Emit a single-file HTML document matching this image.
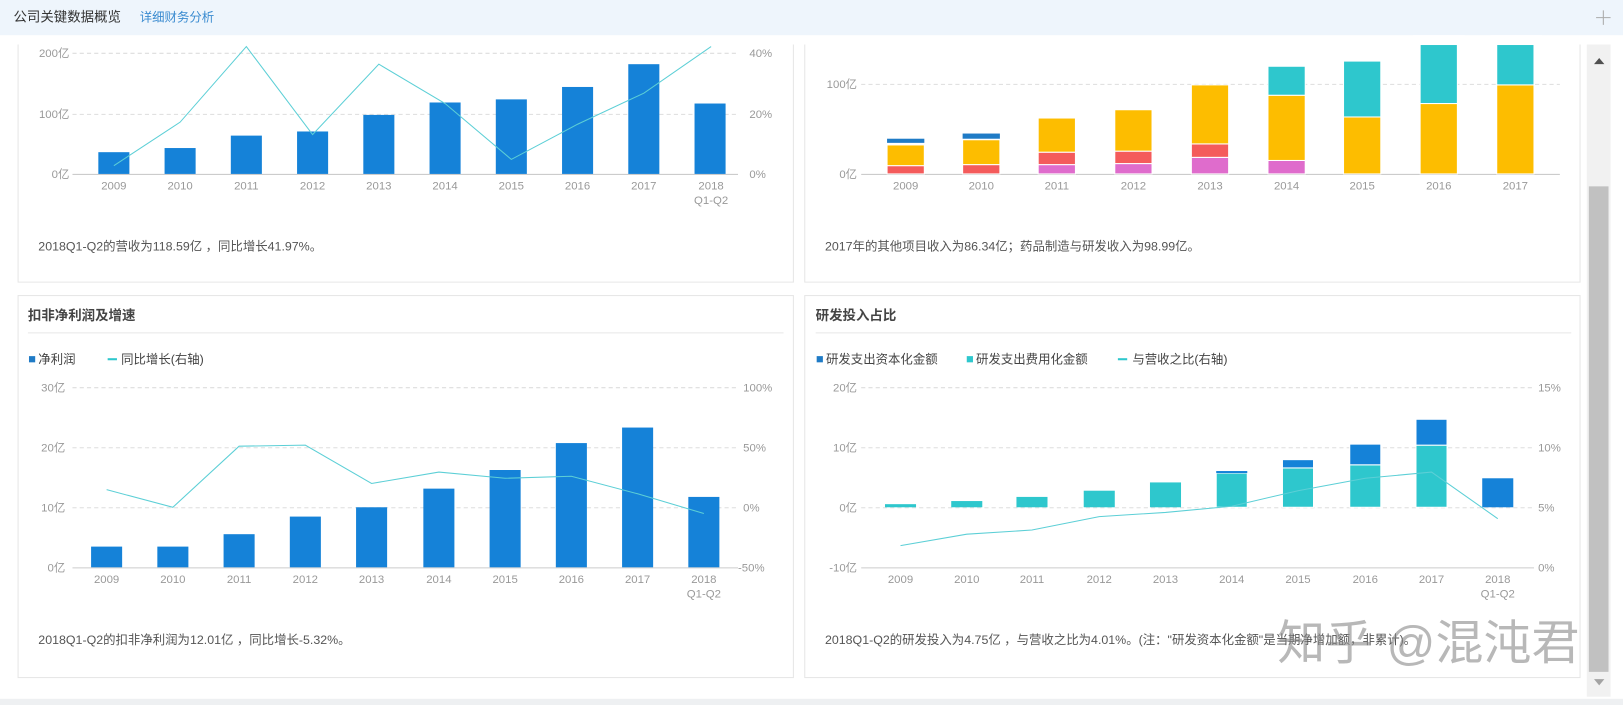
<!DOCTYPE html>
<html><head><meta charset="utf-8">
<style>
html,body{margin:0;padding:0;background:#fff;width:1623px;height:705px;overflow:hidden}
svg{display:block}
text{font-family:"Liberation Sans","Noto Sans CJK SC",sans-serif}
.ax{font-size:11px;fill:#999}
.t{font-size:12px;fill:#555}
.h{font-size:13px;fill:#444;font-weight:bold}
.lg{font-size:12px;fill:#444}
</style></head><body>
<svg width="1623" height="705" viewBox="0 0 1568 681" preserveAspectRatio="none">
<rect x="0" y="0" width="1568" height="681" fill="#fff"/>
<rect x="0" y="0" width="1568" height="34" fill="#eef5fc"/>
<text x="13" y="21" font-size="13" fill="#333">公司关键数据概览</text>
<text x="135" y="21" font-size="12" fill="#3a8bd0">详细财务分析</text>
<path d="M1549 10v14M1542 17h14" stroke="#aaa" stroke-width="1"/>
<rect x="0" y="675" width="1568" height="6" fill="#eef0f2"/>
<rect x="1533" y="43" width="23" height="630" fill="#f1f1f1"/>
<rect x="1535" y="180" width="19" height="469" fill="#c1c1c1"/>
<path d="M1540 62l5-6 5 6z" fill="#505050"/>
<path d="M1540 656l5 6 5-6z" fill="#a3a3a3"/>

<g fill="none" stroke="#e6e6e6">
<path d="M17.5 43v229.5h749v-229.5"/>
<path d="M777.5 43v229.5h749v-229.5"/>
<rect x="17.5" y="285.5" width="749" height="369"/>
<rect x="777.5" y="285.5" width="749" height="369"/>
</g>

<g stroke="#ddd" stroke-dasharray="4,3"><path d="M70 51.5h643M70 110.5h643"/></g>
<path d="M70 168.5h643" stroke="#ccc"/>
<g class="ax" text-anchor="end"><text x="67" y="55">200亿</text><text x="67" y="114">100亿</text><text x="67" y="172">0亿</text></g>
<g class="ax"><text x="724" y="55">40%</text><text x="724" y="114">20%</text><text x="724" y="172">0%</text></g>
<g fill="#1582d8">
<rect x="95" y="147" width="30" height="21"/><rect x="159" y="143" width="30" height="25"/>
<rect x="223" y="131" width="30" height="37"/><rect x="287" y="127" width="30" height="41"/>
<rect x="351" y="111" width="30" height="57"/><rect x="415" y="99" width="30" height="69"/>
<rect x="479" y="96" width="30" height="72"/><rect x="543" y="84" width="30" height="84"/>
<rect x="607" y="62" width="30" height="106"/><rect x="671" y="100" width="30" height="68"/>
</g>
<polyline fill="none" stroke="#5ccfd6" stroke-width="1" points="110,160 174,118 238,45 302,130 366,62 430,100 494,154 558,120 622,90 687,45"/>
<g class="ax" text-anchor="middle"><text x="110" y="183">2009</text><text x="174" y="183">2010</text><text x="238" y="183">2011</text><text x="302" y="183">2012</text><text x="366" y="183">2013</text><text x="430" y="183">2014</text><text x="494" y="183">2015</text><text x="558" y="183">2016</text><text x="622" y="183">2017</text><text x="687" y="183">2018</text><text x="687" y="197">Q1-Q2</text></g>
<text class="t" x="37" y="242">2018Q1-Q2的营收为118.59亿 ，同比增长41.97%。</text>

<path d="M832 81.5h675" stroke="#ddd" stroke-dasharray="4,3"/>
<path d="M832 168.5h675" stroke="#ccc"/>
<g class="ax" text-anchor="end"><text x="828" y="85">100亿</text><text x="828" y="172">0亿</text></g>
<g stroke="#fff" stroke-width="1">
<rect x="857" y="160" width="36" height="8" fill="#f45b5b"/><rect x="857" y="140" width="36" height="20" fill="#fdbd00"/><rect x="857" y="134" width="36" height="4" fill="#1f7bc6" stroke="none"/>
<rect x="930" y="159" width="36" height="9" fill="#f45b5b"/><rect x="930" y="135" width="36" height="24" fill="#fdbd00"/><rect x="930" y="129" width="36" height="5" fill="#1f7bc6" stroke="none"/>
<rect x="1003" y="159" width="36" height="9" fill="#df6ccc"/><rect x="1003" y="147" width="36" height="12" fill="#f45b5b"/><rect x="1003" y="114" width="36" height="33" fill="#fdbd00"/>
<rect x="1077" y="158" width="36" height="10" fill="#df6ccc"/><rect x="1077" y="146" width="36" height="12" fill="#f45b5b"/><rect x="1077" y="106" width="36" height="40" fill="#fdbd00"/>
<rect x="1151" y="152" width="36" height="16" fill="#df6ccc"/><rect x="1151" y="139" width="36" height="13" fill="#f45b5b"/><rect x="1151" y="82" width="36" height="57" fill="#fdbd00"/>
<rect x="1225" y="155" width="36" height="13" fill="#df6ccc"/><rect x="1225" y="92" width="36" height="63" fill="#fdbd00"/><rect x="1225" y="64" width="36" height="28" fill="#2ec7cd"/>
<rect x="1298" y="113" width="36" height="55" fill="#fdbd00"/><rect x="1298" y="59" width="36" height="54" fill="#2ec7cd"/>
<rect x="1372" y="100" width="36" height="68" fill="#fdbd00"/><rect x="1372" y="43" width="36" height="57" fill="#2ec7cd"/>
<rect x="1446" y="82" width="36" height="86" fill="#fdbd00"/><rect x="1446" y="43" width="36" height="39" fill="#2ec7cd"/>
</g>
<rect x="1440" y="34" width="50" height="9" fill="#fff"/>
<rect x="1365" y="34" width="50" height="9" fill="#fff"/>
<g class="ax" text-anchor="middle"><text x="875" y="183">2009</text><text x="948" y="183">2010</text><text x="1021" y="183">2011</text><text x="1095" y="183">2012</text><text x="1169" y="183">2013</text><text x="1243" y="183">2014</text><text x="1316" y="183">2015</text><text x="1390" y="183">2016</text><text x="1464" y="183">2017</text></g>
<text class="t" x="797" y="242">2017年的其他项目收入为86.34亿；药品制造与研发收入为98.99亿。</text>

<text class="h" x="27" y="309">扣非净利润及增速</text>
<path d="M27 321.5h730" stroke="#e6e6e6"/>
<rect x="28" y="344" width="6" height="6" fill="#1f7bc6"/><text class="lg" x="37" y="351">净利润</text>
<path d="M104 347h9" stroke="#2ec7cd" stroke-width="2"/><text class="lg" x="117" y="351">同比增长(右轴)</text>
<g stroke="#ddd" stroke-dasharray="4,3"><path d="M70 374.5h643M70 432.5h643M70 490.5h643"/></g>
<path d="M70 548.5h643" stroke="#ccc"/>
<g class="ax" text-anchor="end"><text x="63" y="378">30亿</text><text x="63" y="436">20亿</text><text x="63" y="494">10亿</text><text x="63" y="552">0亿</text></g>
<g class="ax"><text x="718" y="378">100%</text><text x="718" y="436">50%</text><text x="718" y="494">0%</text><text x="713" y="552">-50%</text></g>
<g fill="#1582d8">
<rect x="88" y="528" width="30" height="20"/><rect x="152" y="528" width="30" height="20"/>
<rect x="216" y="516" width="30" height="32"/><rect x="280" y="499" width="30" height="49"/>
<rect x="344" y="490" width="30" height="58"/><rect x="409" y="472" width="30" height="76"/>
<rect x="473" y="454" width="30" height="94"/><rect x="537" y="428" width="30" height="120"/>
<rect x="601" y="413" width="30" height="135"/><rect x="665" y="480" width="30" height="68"/>
</g>
<polyline fill="none" stroke="#5ccfd6" points="103,473 167,490 231,431 295,430 359,467 424,456 488,462 552,460 616,477 680,496"/>
<g class="ax" text-anchor="middle"><text x="103" y="563">2009</text><text x="167" y="563">2010</text><text x="231" y="563">2011</text><text x="295" y="563">2012</text><text x="359" y="563">2013</text><text x="424" y="563">2014</text><text x="488" y="563">2015</text><text x="552" y="563">2016</text><text x="616" y="563">2017</text><text x="680" y="563">2018</text><text x="680" y="577">Q1-Q2</text></g>
<text class="t" x="37" y="622">2018Q1-Q2的扣非净利润为12.01亿 ，同比增长-5.32%。</text>

<text class="h" x="788" y="309">研发投入占比</text>
<path d="M788 321.5h730" stroke="#e6e6e6"/>
<rect x="789" y="344" width="6" height="6" fill="#1f7bc6"/><text class="lg" x="798" y="351">研发支出资本化金额</text>
<rect x="934" y="344" width="6" height="6" fill="#2ec7cd"/><text class="lg" x="943" y="351">研发支出费用化金额</text>
<path d="M1080 347h9" stroke="#2ec7cd" stroke-width="2"/><text class="lg" x="1094" y="351">与营收之比(右轴)</text>
<g stroke="#ddd" stroke-dasharray="4,3"><path d="M832 374.5h650M832 432.5h650M832 490.5h650"/></g>
<path d="M832 548.5h650" stroke="#ccc"/>
<g class="ax" text-anchor="end"><text x="828" y="378">20亿</text><text x="828" y="436">10亿</text><text x="828" y="494">0亿</text><text x="828" y="552">-10亿</text></g>
<g class="ax"><text x="1486" y="378">15%</text><text x="1486" y="436">10%</text><text x="1486" y="494">5%</text><text x="1486" y="552">0%</text></g>
<g stroke="#fff">
<rect x="855" y="487" width="30" height="3" fill="#2ec7cd" stroke="none"/>
<rect x="919" y="484" width="30" height="6" fill="#2ec7cd" stroke="none"/>
<rect x="982" y="480" width="30" height="10" fill="#2ec7cd" stroke="none"/>
<rect x="1047" y="474" width="30" height="16" fill="#2ec7cd" stroke="none"/>
<rect x="1111" y="466" width="30" height="24" fill="#2ec7cd" stroke="none"/>
<rect x="1175" y="457" width="30" height="33" fill="#2ec7cd"/><rect x="1175" y="455" width="30" height="2" fill="#1582d8" stroke="none"/>
<rect x="1239" y="452" width="30" height="38" fill="#2ec7cd"/><rect x="1239" y="444" width="30" height="8" fill="#1582d8"/>
<rect x="1304" y="449" width="30" height="41" fill="#2ec7cd"/><rect x="1304" y="429" width="30" height="20" fill="#1582d8"/>
<rect x="1368" y="430" width="30" height="60" fill="#2ec7cd"/><rect x="1368" y="405" width="30" height="25" fill="#1582d8"/>
<rect x="1432" y="462" width="30" height="28" fill="#1582d8" stroke="none"/>
</g>
<polyline fill="none" stroke="#5ccfd6" points="870,527 934,516 997,512 1062,499 1126,495 1190,489 1254,474 1319,462 1383,456 1447,501"/>
<g class="ax" text-anchor="middle"><text x="870" y="563">2009</text><text x="934" y="563">2010</text><text x="997" y="563">2011</text><text x="1062" y="563">2012</text><text x="1126" y="563">2013</text><text x="1190" y="563">2014</text><text x="1254" y="563">2015</text><text x="1319" y="563">2016</text><text x="1383" y="563">2017</text><text x="1447" y="563">2018</text><text x="1447" y="577">Q1-Q2</text></g>
<text class="t" x="797" y="622">2018Q1-Q2的研发投入为4.75亿 ，与营收之比为4.01%。(注："研发资本化金额"是当期净增加额，非累计)。</text>
<text x="1234" y="637" font-size="46" fill="#888" fill-opacity="0.6" textLength="292" lengthAdjust="spacingAndGlyphs">知乎 @混沌君</text>
</svg>
</body></html>
